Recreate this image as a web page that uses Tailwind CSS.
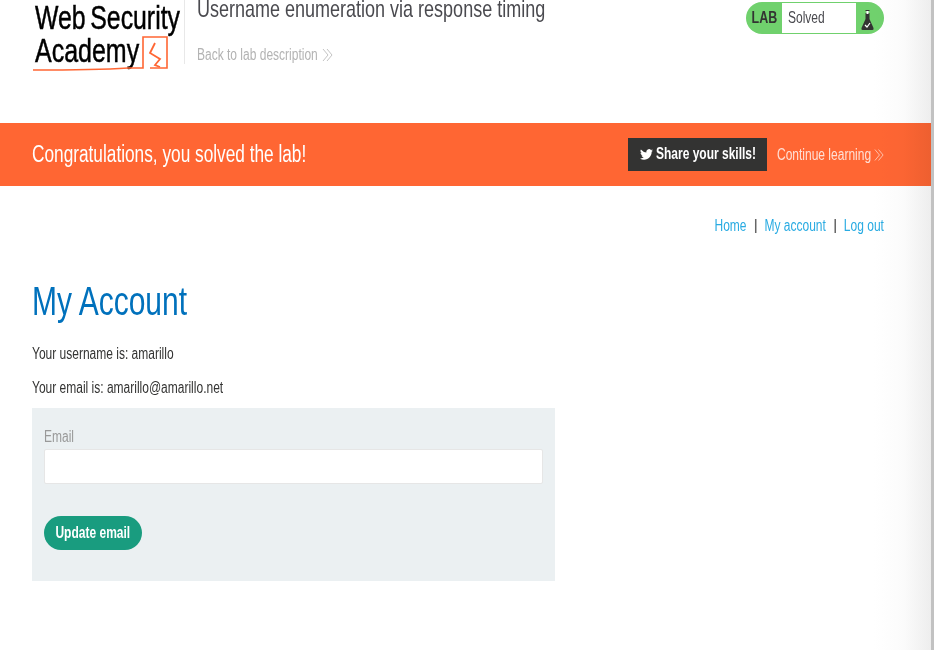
<!DOCTYPE html>
<html><head><meta charset="utf-8"><script src="https://cdn.jsdelivr.net/npm/@tailwindcss/browser@4"></script></head>
<body class="bg-white overflow-hidden">
<div class="relative w-[934px] h-[650px] overflow-hidden font-['Liberation_Sans',sans-serif] text-[#333332]">
  <header class="h-[123px] pl-[32px] pr-[50px] flex items-start">
    <div class="w-[153px] h-[70px] relative shrink-0 mr-[12px] border-r border-[#e8e8e8] mt-[-6px]">
      <div class="text-black text-[34px] leading-[34px] origin-left scale-x-[0.73] whitespace-nowrap ml-[3px] mt-[6px] [word-spacing:-3px] [-webkit-text-stroke:0.5px_black]">Web Security</div>
      <div class="text-black text-[34px] leading-[34px] origin-left scale-x-[0.735] whitespace-nowrap ml-[3px] mt-[-1px] [-webkit-text-stroke:0.5px_black]">Academy</div>
      <svg class="absolute left-0 top-[36px]" width="140" height="44" viewBox="0 0 140 44" fill="none" stroke="#ff6633" stroke-width="1.6"><path d="M1 40C40 40 80 39 96 38H111V7H135V38H118"/><path d="M123 13L118 23L128 29L123 35L128 37" stroke-width="1.8"/></svg>
    </div>
    <div class="flex-1 min-w-0">
      <div class="text-[24px] leading-[24px] mt-[-3px] origin-left scale-x-[0.75] whitespace-nowrap text-[#4a4a4f]">Username enumeration via response timing</div>
      <div class="flex items-center mt-[24px] text-[#b3b3b3] text-[16px] leading-[20px]">
        <span class="origin-left scale-x-[0.75] whitespace-nowrap inline-block w-[120px]">Back to lab description</span>
        <svg class="ml-[5px]" width="11" height="14" viewBox="0 0 11 14" fill="none" stroke="#c4c4c4" stroke-width="1"><path d="M1 1l5 6-5 6M5 1l5 6-5 6"/></svg>
      </div>
    </div>
    <div class="mt-[2px] flex h-[32px] w-[138px] rounded-full bg-[#70d16d] items-stretch shrink-0">
      <div class="w-[36px] flex items-center justify-center text-[16px] font-bold text-[#333332]"><span class="scale-x-[0.78]">LAB</span></div>
      <div class="w-[74px] bg-white my-[1px] flex items-center pl-[6px] text-[16px]"><span class="origin-left scale-x-[0.75] text-[#4a4a4f]">Solved</span></div>
      <div class="flex-1 flex items-center pl-[5px]">
        <svg width="13" height="24" viewBox="0 0 13 24"><path d="M1.500 24q-1.500 0-1-2L4.500 13V7h4v6l4 9q.5 2-1 2z" fill="#333332"/><rect x="4.500" y="4" width="4" height="1" fill="#333332"/><rect x="5.500" y="5" width="2" height="3" fill="#fff"/><path d="M4 19l2 2 3-4" fill="none" stroke="#fff" stroke-width="1.200"/></svg>
      </div>
    </div>
  </header>
  <section class="h-[63px] bg-[#ff6633] pl-[32px] pr-[50px] flex items-center text-white">
    <div class="flex-1 text-[23px] origin-left scale-x-[0.75] whitespace-nowrap">Congratulations, you solved the lab!</div>
    <div class="h-[33px] mb-[1px] w-[139px] bg-[#333332] flex items-center pl-[12px] font-bold text-[16px] whitespace-nowrap">
      <svg class="shrink-0 mr-[3px]" width="13" height="11" viewBox="0 0 24 20" fill="#fff"><path d="M24 2.400c-.9.4-1.800.7-2.800.8 1-.6 1.800-1.600 2.200-2.700-1 .6-2 1-3.100 1.200A4.900 4.900 0 0 0 11.900 6.200 14 14 0 0 1 1.700.9a4.900 4.900 0 0 0 1.500 6.600c-.8 0-1.600-.2-2.200-.6 0 2.400 1.700 4.400 3.900 4.900-.7.2-1.500.2-2.200.1.600 2 2.400 3.400 4.600 3.400A9.900 9.900 0 0 1 0 17.300 14 14 0 0 0 7.500 19.500c9.100 0 14.300-7.700 14-14.600 1-.7 1.800-1.600 2.500-2.500z"/></svg>
      <span class="inline-block w-[100px] origin-left scale-x-[0.75]">Share your skills!</span>
    </div>
    <div class="ml-[10px] flex items-center text-[16px] text-[#ffe0d6]">
      <span class="inline-block w-[96px] origin-left scale-x-[0.75] whitespace-nowrap">Continue learning</span>
      <svg class="ml-[1px]" width="10" height="14" viewBox="0 0 11 14" fill="none" stroke="#ffc9b5" stroke-width="1"><path d="M1 1l5 6-5 6M5 1l5 6-5 6"/></svg>
    </div>
  </section>
  <main class="pl-[32px] pr-[50px]">
    <div class="flex justify-end mt-[30px]">
      <nav class="flex items-center h-[20px] text-[16px] text-[#29abe2] whitespace-nowrap origin-right scale-x-[0.75]">
        <span>Home</span>
        <span class="mx-[11px] w-[2px] h-[14px] bg-[#666]"></span>
        <span>My account</span>
        <span class="mx-[11px] w-[2px] h-[14px] bg-[#666]"></span>
        <span>Log out</span>
      </nav>
    </div>
    <h1 class="mt-[43px] text-[40px] leading-[44px] text-[#0071bc] origin-left scale-x-[0.75] whitespace-nowrap">My Account</h1>
    <p class="mt-[21px] text-[16px] leading-[20px] origin-left scale-x-[0.75] whitespace-nowrap">Your username is: amarillo</p>
    <p class="mt-[14px] text-[16px] leading-[20px] origin-left scale-x-[0.75] whitespace-nowrap">Your email is: amarillo@amarillo.net</p>
    <form class="mt-[10px] w-[523px] h-[173px] bg-[#ebf0f2] px-[12px] pt-[19px]">
      <div class="text-[16px] leading-[20px] text-[#999999] origin-left scale-x-[0.75]">Email</div>
      <div class="mt-[2px] h-[35px] bg-white border border-[#e6e6e6] rounded-[2px]"></div>
      <div class="mt-[32px] w-[98px] h-[34px] rounded-full bg-[#199c7f] text-white font-bold text-[16px] flex items-center justify-center"><span class="scale-x-[0.75] whitespace-nowrap">Update email</span></div>
    </form>
  </main>
  <div class="absolute top-0 right-0 h-full w-[60px] bg-gradient-to-r from-white via-[#fbfbfb] to-[#ececec] mix-blend-multiply"></div>
  <div class="absolute top-0 right-0 h-full w-[3px] bg-[#c2c2c2]"></div>
</div>
</body></html>
